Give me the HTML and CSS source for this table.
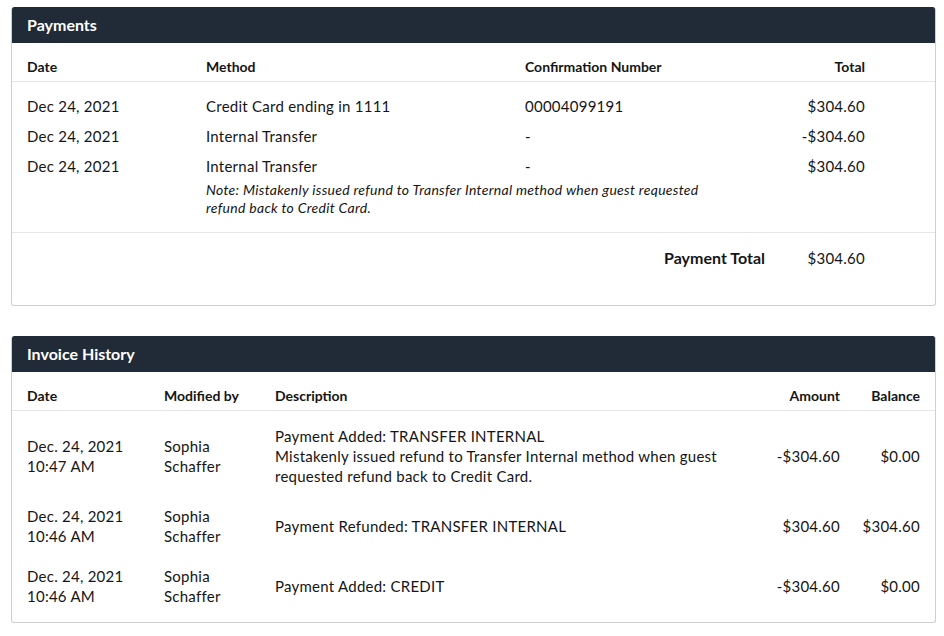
FILE: index.html
```html
<!DOCTYPE html>
<html>
<head>
<meta charset="utf-8">
<link rel="stylesheet" href="styles.css">
</head>
<body>
<section class="card">
  <div class="card-head">Payments</div>
  <div class="pay-row cols">
    <div>Date</div><div>Method</div><div>Confirmation Number</div><div class="num">Total</div>
  </div>
  <div class="pay-body">
    <div class="pay-row">
      <div>Dec 24, 2021</div><div>Credit Card ending in 1111</div><div>00004099191</div><div class="num">$304.60</div>
    </div>
    <div class="pay-row">
      <div>Dec 24, 2021</div><div>Internal Transfer</div><div>-</div><div class="num">-$304.60</div>
    </div>
    <div class="pay-row">
      <div>Dec 24, 2021</div><div>Internal Transfer</div><div>-</div><div class="num">$304.60</div>
      <div></div><div class="note">Note: Mistakenly issued refund to Transfer Internal method when guest requested refund back to Credit Card.</div>
    </div>
  </div>
  <div class="pay-total">
    <div class="total-label">Payment Total</div><div class="num">$304.60</div>
  </div>
</section>

<section class="card">
  <div class="card-head">Invoice History</div>
  <div class="inv-row cols">
    <div>Date</div><div>Modified by</div><div>Description</div><div class="num">Amount</div><div class="num">Balance</div>
  </div>
  <div class="inv-body">
    <div class="inv-row">
      <div>Dec. 24, 2021<br>10:47 AM</div><div>Sophia<br>Schaffer</div><div>Payment Added: TRANSFER INTERNAL<br>Mistakenly issued refund to Transfer Internal method when guest requested refund back to Credit Card.</div><div class="num">-$304.60</div><div class="num">$0.00</div>
    </div>
    <div class="inv-row">
      <div>Dec. 24, 2021<br>10:46 AM</div><div>Sophia<br>Schaffer</div><div>Payment Refunded: TRANSFER INTERNAL</div><div class="num">$304.60</div><div class="num">$304.60</div>
    </div>
    <div class="inv-row">
      <div>Dec. 24, 2021<br>10:46 AM</div><div>Sophia<br>Schaffer</div><div>Payment Added: CREDIT</div><div class="num">-$304.60</div><div class="num">$0.00</div>
    </div>
  </div>
</section>
</body>
</html>
```
FILE: styles.css
```css
* { box-sizing: border-box; }
body {
  margin: 0;
  padding: 7px 8px 0 11px;
  font-family: "Lato", "Liberation Sans", sans-serif;
  font-size: 15px;
  line-height: 20px;
  letter-spacing: 0.25px;
  color: #151515;
  background: #fff;
}
.card {
  width: 925px;
  border: 1px solid #cfcfcf;
  border-top: none;
  border-radius: 3px;
  margin-bottom: 30px;
  overflow: hidden;
}
.card-head {
  background: #212b37;
  color: #fff;
  font-weight: 700;
  font-size: 16px;
  letter-spacing: 0;
  height: 36px;
  line-height: 35px;
  padding: 0 16px;
  margin: 0 -1px;
  border-radius: 3px 3px 0 0;
}
.cols {
  font-weight: 700;
  font-size: 14px;
  letter-spacing: 0;
  padding-top: 14px !important;
  padding-bottom: 4px !important;
  border-bottom: 1px solid #e6e6e6;
}
.num { text-align: right; }

.pay-row {
  display: grid;
  grid-template-columns: 179px 319px 1fr 120px;
  padding: 5px 70px 5px 15px;
}
.pay-body {
  padding: 9px 0 10px;
  border-bottom: 1px solid #e6e6e6;
}
.note {
  grid-column: 2 / 4;
  font-style: italic;
  font-size: 14px;
  letter-spacing: 0.3px;
  line-height: 18px;
  padding-top: 5px;
  max-width: 515px;
}
.pay-total {
  display: grid;
  grid-template-columns: 1fr 100px;
  padding: 15px 70px 37px 15px;
}
.total-label {
  font-weight: 700;
  font-size: 16px;
  letter-spacing: 0;
  text-align: right;
}

.inv-row {
  display: grid;
  grid-template-columns: 137px 111px 465px 1fr 80px;
  align-items: center;
  padding: 10px 15px 10px 15px;
}
.inv-body {
  padding: 5px 0 6px;
}
```
